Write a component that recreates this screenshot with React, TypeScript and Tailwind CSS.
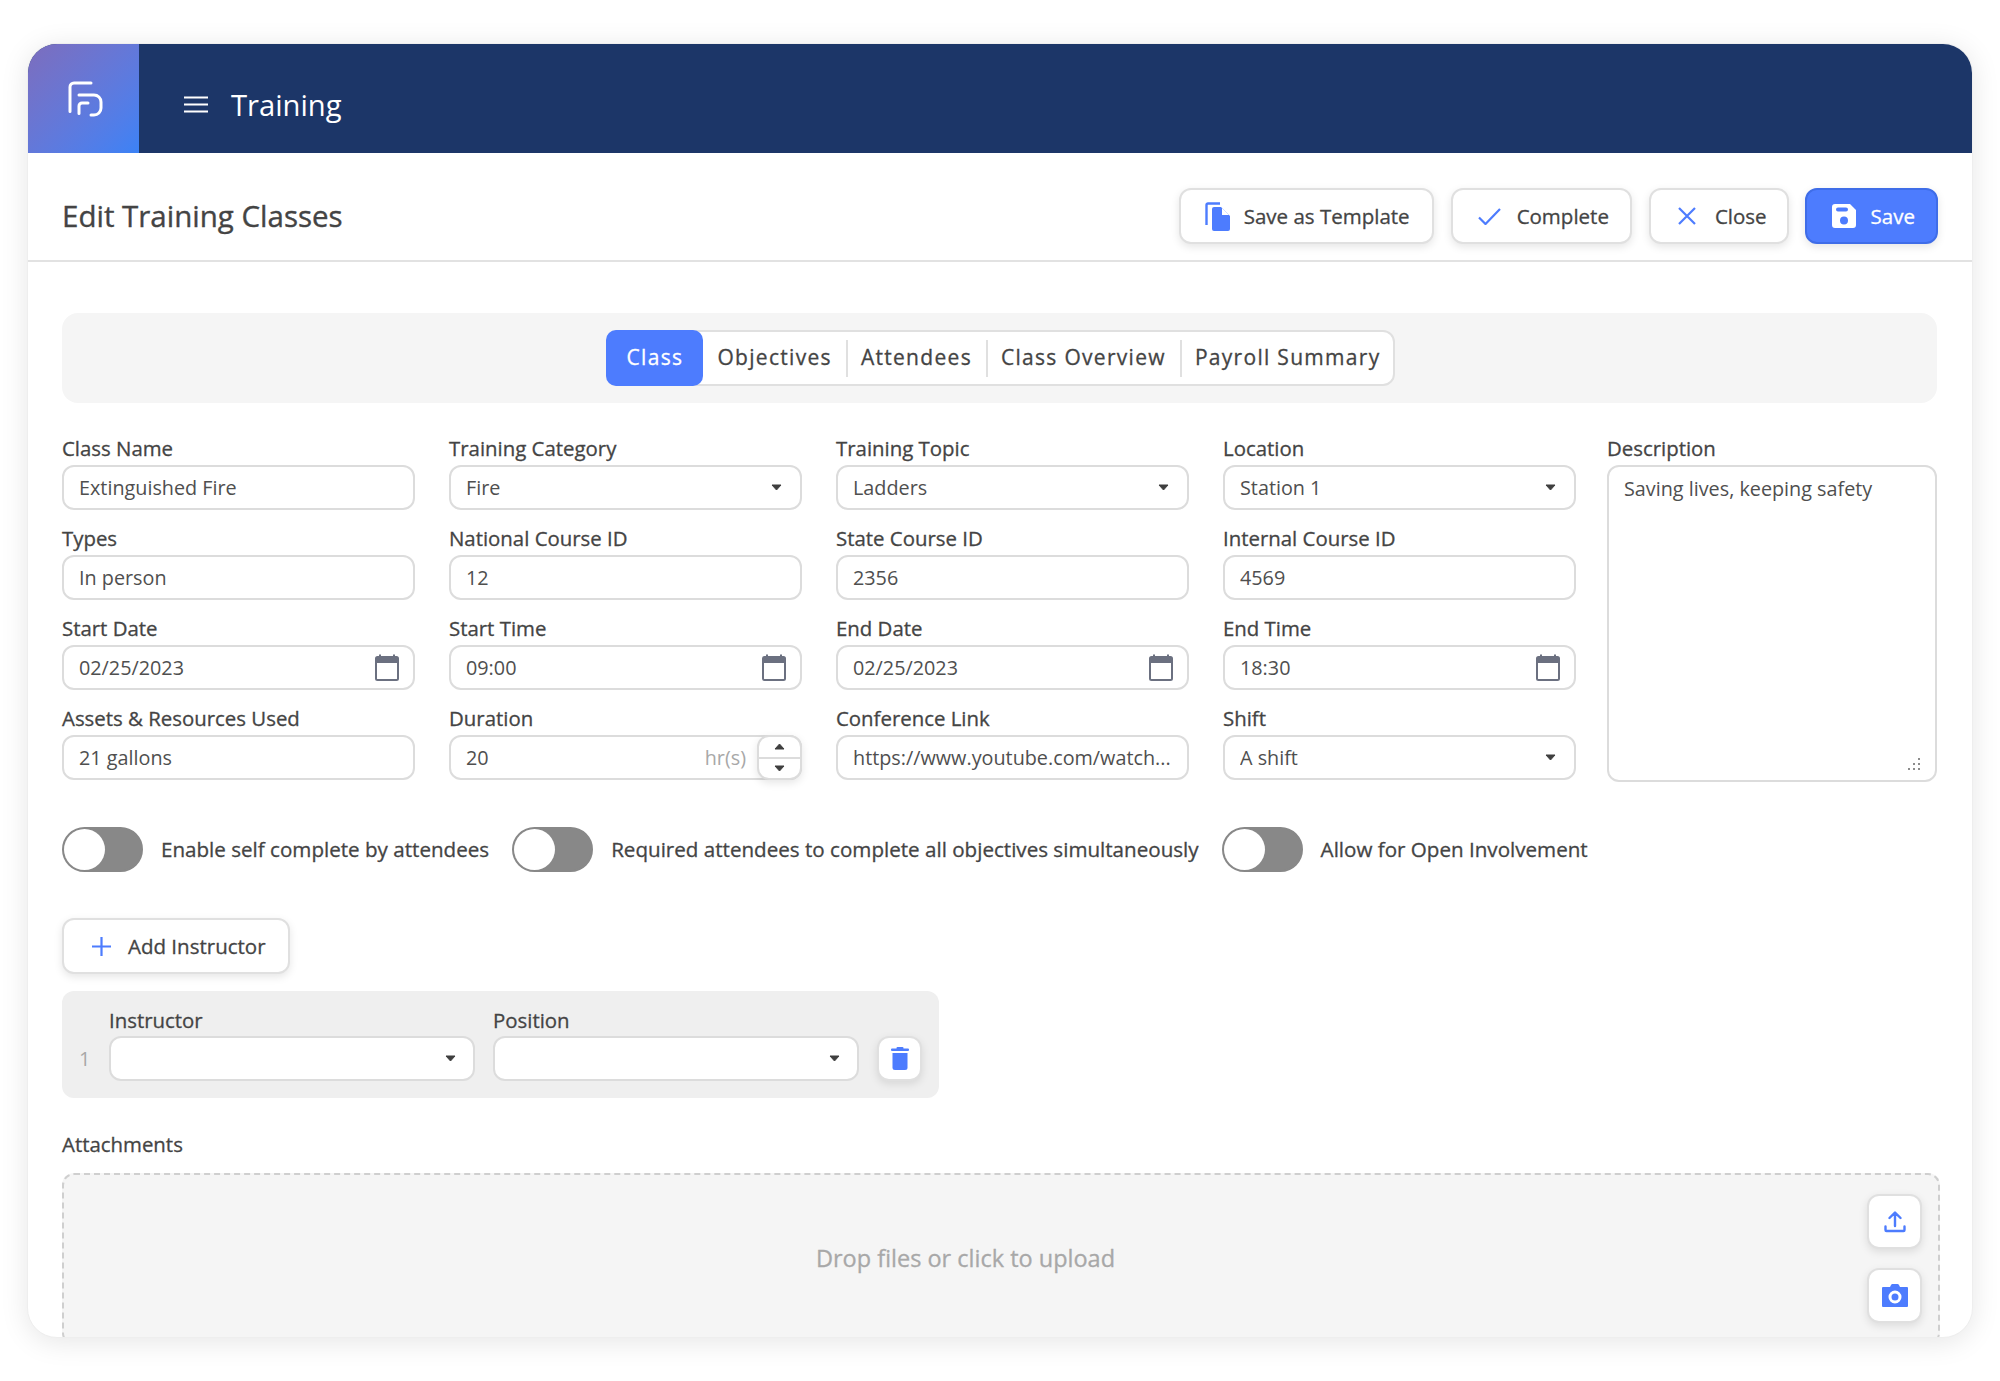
import React from "react";

const ROWS = [
  [
    { label: "Class Name", value: "Extinguished Fire" },
    { label: "Training Category", value: "Fire", kind: "select" },
    { label: "Training Topic", value: "Ladders", kind: "select" },
    { label: "Location", value: "Station 1", kind: "select" },
  ],
  [
    { label: "Types", value: "In person" },
    { label: "National Course ID", value: "12" },
    { label: "State Course ID", value: "2356" },
    { label: "Internal Course ID", value: "4569" },
  ],
  [
    { label: "Start Date", value: "02/25/2023", kind: "date" },
    { label: "Start Time", value: "09:00", kind: "date" },
    { label: "End Date", value: "02/25/2023", kind: "date" },
    { label: "End Time", value: "18:30", kind: "date" },
  ],
  [
    { label: "Assets & Resources Used", value: "21 gallons" },
    { label: "Duration", value: "20", kind: "number" },
    { label: "Conference Link", value: "https://www.youtube.com/watch..." },
    { label: "Shift", value: "A shift", kind: "select" },
  ],
];

const TABS = [
  { label: "Objectives", className: "pr-[14px] pl-[14px]" },
  { label: "Attendees", className: "border-l-2 border-[#e0e0e0] pr-[14px] pl-[13px]" },
  { label: "Class Overview", className: "border-l-2 border-[#e0e0e0] pr-[14px] pl-[13px]" },
  { label: "Payroll Summary", className: "border-l-2 border-[#e0e0e0] pr-[12px] pl-[13px]" },
];

const TOGGLES = [
  "Enable self complete by attendees",
  "Required attendees to complete all objectives simultaneously",
  "Allow for Open Involvement",
];

// Open Sans has no 500 here, so medium text is regular with a thin stroke
const LABEL = "text-[20.4px] leading-[22px] text-[#444] [-webkit-text-stroke-width:0.3px]";

function Caret({ up = false }: { up?: boolean }) {
  return (
    <svg width="11" height="7" viewBox="0 0 11 7" className={up ? "rotate-180" : ""}>
      <path d="M1 1h9L5.5 6z" fill="#3f3f3f" stroke="#3f3f3f" strokeWidth="1" strokeLinejoin="round" />
    </svg>
  );
}

function CalendarIcon() {
  return (
    <svg width="24" height="27" viewBox="0 0 24 27" fill="none">
      <path d="M5 0.5v4M19 0.5v4" stroke="#6b7080" strokeWidth="2" />
      <rect x="1" y="3" width="22" height="23" rx="1.5" stroke="#6b7080" strokeWidth="2" />
      <rect x="1" y="3" width="22" height="6" fill="#6b7080" />
    </svg>
  );
}

function Field({ label, value, kind }: { label: string; value: string; kind?: string }) {
  return (
    <div>
      <div className={`mb-[6px] ${LABEL}`}>{label}</div>
      <div className="flex h-[45px] items-center rounded-[12px] border-2 border-[#dcdcdc] bg-white pl-[15px] text-[19.8px] text-[#4f4f4f]">
        <span className="flex-1 truncate">{value}</span>
        {kind === "select" && (
          <span className="mr-[18px] flex">
            <Caret />
          </span>
        )}
        {kind === "date" && (
          <span className="mr-[14px] flex">
            <CalendarIcon />
          </span>
        )}
        {kind === "number" && (
          <>
            <span className="mr-[11px] text-[#a8a8a8]">hr(s)</span>
            <div className="-my-[2px] -mr-[2px] flex h-[45px] w-[45px] flex-col rounded-[12px] border-2 border-[#dcdcdc] bg-white shadow-[0_3px_8px_rgba(0,0,0,0.1)]">
              <div className="flex flex-1 items-center justify-center border-b-2 border-[#dcdcdc]">
                <Caret up />
              </div>
              <div className="flex flex-1 items-center justify-center">
                <Caret />
              </div>
            </div>
          </>
        )}
      </div>
    </div>
  );
}

function ActionButton({
  icon,
  label,
  className,
}: {
  icon: React.ReactNode;
  label: string;
  className: string;
}) {
  return (
    <button
      className={`flex h-[56px] items-center rounded-[12px] border-2 border-[#e0e0e0] bg-white text-[20.5px] text-[#444] shadow-[0_3px_8px_rgba(0,0,0,0.1)] [-webkit-text-stroke-width:0.3px] ${className}`}
    >
      {icon}
      {label}
    </button>
  );
}

function Toggle() {
  return (
    <div className="flex h-[45px] w-[81px] shrink-0 items-center rounded-full border-2 border-[#888] bg-[#888]">
      <div className="h-[41px] w-[41px] rounded-full bg-white" />
    </div>
  );
}

function SquareButton({ children, className }: { children: React.ReactNode; className: string }) {
  return (
    <button
      className={`flex items-center justify-center rounded-[12px] border-2 border-[#e0e0e0] bg-white shadow-[0_3px_8px_rgba(0,0,0,0.1)] ${className}`}
    >
      {children}
    </button>
  );
}

export default function App() {
  return (
    <div className="h-[1381px] w-[2000px] bg-white pt-[43px] pl-[27px] font-['Open_Sans',sans-serif]">
      <div className="flex h-[1295px] w-[1946px] flex-col overflow-hidden rounded-[30px] border border-[#eee] bg-white shadow-[0_4px_28px_rgba(0,0,0,0.1)]">
        <header className="flex h-[109px] shrink-0 items-stretch bg-[#1c3668]">
          <div className="flex w-[111px] items-center justify-center bg-gradient-to-br from-[#7c6dbd] to-[#3b82f6]">
            <svg width="60" height="60" viewBox="0 0 60 60" fill="none" stroke="white" strokeWidth="3" strokeLinecap="round" className="mt-[2px] -ml-[7px]">
              <path d="M20 41.5V17a4 4 0 0 1 4-4h17" />
              <path d="M29 25h15a7 7 0 0 1 7 7v6a7 7 0 0 1-7 7h-3" />
              <path d="M29 43.5V36a3 3 0 0 1 3-3h6" />
            </svg>
          </div>
          <div className="ml-[45px] flex items-center pt-[14px]">
            <svg width="24" height="17" viewBox="0 0 24 17" className="-mt-[2px]">
              <path d="M0 1.5h24M0 8.5h24M0 15.5h24" stroke="white" strokeWidth="2.2" />
            </svg>
            <span className="ml-[23px] text-[29.2px] text-white">Training</span>
          </div>
        </header>

        <div className="flex h-[109px] shrink-0 items-center justify-between border-b-2 border-[#e2e2e2] pt-[19px] pr-[34px] pl-[34px]">
          <h1 className="text-[29.5px] text-[#444] [-webkit-text-stroke-width:0.35px]">Edit Training Classes</h1>
          <div className="flex gap-[17px]">
            <ActionButton
              className="pr-[22px] pl-[24px]"
              label="Save as Template"
              icon={
                <svg width="25" height="29" viewBox="0 0 25 29" className="mr-[14px]">
                  <path d="M1.5 23V3a1.5 1.5 0 0 1 1.5-1.5h12" fill="none" stroke="#4d7cfe" strokeWidth="2.4" />
                  <path d="M7 7a2 2 0 0 1 2-2h7l9 9v13a2 2 0 0 1-2 2H9a2 2 0 0 1-2-2z" fill="#4d7cfe" />
                  <path d="M17 6l7 7h-7z" fill="white" />
                </svg>
              }
            />
            <ActionButton
              className="pr-[21px] pl-[25px]"
              label="Complete"
              icon={
                <svg width="23" height="17" viewBox="0 0 23 17" className="mr-[16px]" fill="none">
                  <path d="M1 9.5l6.5 6.5L22 1" stroke="#4d7cfe" strokeWidth="2.2" />
                </svg>
              }
            />
            <ActionButton
              className="pr-[20px] pl-[27px]"
              label="Close"
              icon={
                <svg width="18" height="18" viewBox="0 0 18 18" className="mr-[19px]" fill="none">
                  <path d="M1 1l16 16M17 1L1 17" stroke="#4d7cfe" strokeWidth="2.2" />
                </svg>
              }
            />
            <button className="-ml-[1px] flex h-[56px] items-center rounded-[12px] border-2 border-[#3f6de8] bg-[#4d7cfe] pr-[21px] pl-[25px] text-[20.5px] text-white shadow-[0_3px_8px_rgba(0,0,0,0.1)] [-webkit-text-stroke-width:0.3px]">
              <svg width="24" height="24" viewBox="0 0 24 24" className="mr-[15px]">
                <path
                  fillRule="evenodd"
                  d="M3 0h15l6 6v15a3 3 0 0 1-3 3H3a3 3 0 0 1-3-3V3a3 3 0 0 1 3-3zM6 3.5a2 2 0 0 0 0 4h8a2 2 0 0 0 0-4zM12 12.5a4 4 0 1 0 0 8 4 4 0 0 0 0-8z"
                  fill="white"
                />
              </svg>
              Save
            </button>
          </div>
        </div>

        <main className="pt-[51px] pr-[35px] pl-[34px]">
          <div className="flex h-[90px] items-center justify-center rounded-[16px] bg-[#f5f5f5]">
            <div className="ml-[2px] flex h-[56px] items-center rounded-[12px] border-2 border-[#e0e0e0] bg-white text-[21px] tracking-[1.3px] text-[#444] [-webkit-text-stroke-width:0.3px]">
              <div className="-my-[2px] -ml-[2px] flex h-[56px] w-[97px] items-center justify-center rounded-[10px] bg-[#4d7cfe] text-white">
                Class
              </div>
              {TABS.map((tab) => (
                <div key={tab.label} className={`flex h-[37px] items-center ${tab.className}`}>
                  {tab.label}
                </div>
              ))}
            </div>
          </div>

          <div className="mt-[34px] flex gap-[31px]">
            <div className="grid w-[1514px] shrink-0 grid-cols-[353px_353px_353px_353px] gap-x-[34px] gap-y-[17px]">
              {ROWS.flat().map((field) => (
                <Field key={field.label} label={field.label} value={field.value} kind={field.kind} />
              ))}
            </div>
            <div className="flex w-[330px] flex-col">
              <div className={`mb-[6px] ${LABEL}`}>Description</div>
              <div className="relative -mb-[2px] flex-1 rounded-[12px] border-2 border-[#dcdcdc] px-[15px] py-[7px] text-[19.8px] text-[#4f4f4f]">
                Saving lives, keeping safety
                <svg width="13" height="13" viewBox="0 0 13 13" className="absolute right-[14px] bottom-[9px]" fill="#8c8c8c">
                  <rect x="10" y="0" width="2" height="2" />
                  <rect x="5" y="5" width="2" height="2" />
                  <rect x="10" y="5" width="2" height="2" />
                  <rect x="0" y="10" width="2" height="2" />
                  <rect x="5" y="10" width="2" height="2" />
                  <rect x="10" y="10" width="2" height="2" />
                </svg>
              </div>
            </div>
          </div>

          <div className="mt-[47px] flex items-center gap-[23px]">
            {TOGGLES.map((label) => (
              <div key={label} className="flex items-center gap-[18px]">
                <Toggle />
                <span className="text-[20.6px] text-[#444] [-webkit-text-stroke-width:0.3px]">{label}</span>
              </div>
            ))}
          </div>

          <ActionButton
            className="mt-[46px] pr-[22px] pl-[28px]"
            label="Add Instructor"
            icon={
              <svg width="19" height="19" viewBox="0 0 19 19" className="mr-[17px]" fill="none">
                <path d="M9.5 0v19M0 9.5h19" stroke="#4d7cfe" strokeWidth="2.2" />
              </svg>
            }
          />

          <div className="mt-[17px] flex h-[107px] w-[877px] items-end rounded-[12px] bg-[#efefef] pb-[17px]">
            <div className="flex h-[45px] w-[47px] items-center pl-[17px] text-[20px] text-[#a8a8a8]">1</div>
            <div className="w-[366px]">
              <div className={`mb-[5px] ${LABEL}`}>Instructor</div>
              <div className="flex h-[45px] items-center justify-end rounded-[12px] border-2 border-[#dcdcdc] bg-white pr-[17px]">
                <Caret />
              </div>
            </div>
            <div className="ml-[18px] w-[366px]">
              <div className={`mb-[5px] ${LABEL}`}>Position</div>
              <div className="flex h-[45px] items-center justify-end rounded-[12px] border-2 border-[#dcdcdc] bg-white pr-[17px]">
                <Caret />
              </div>
            </div>
            <SquareButton className="ml-[18px] h-[45px] w-[45px]">
              <svg width="18" height="23" viewBox="0 0 18 23" fill="#4d7cfe">
                <rect x="5.5" y="0" width="7" height="2.5" rx="1" />
                <rect x="0" y="1.5" width="18" height="2.5" rx="1" />
                <path d="M1.5 6h15v14.5a2.5 2.5 0 0 1-2.5 2.5H4a2.5 2.5 0 0 1-2.5-2.5z" />
              </svg>
            </SquareButton>
          </div>

          <div className={`mt-[35px] mb-[18px] ${LABEL}`}>Attachments</div>

          <div className="flex h-[172px] w-[1878px] rounded-[12px] border-2 border-dashed border-[#cfcfcf] bg-[#f5f5f5] pt-[19px] pr-[16px]">
            <div className="-mt-[19px] flex flex-1 items-center justify-center text-[23.5px] text-[#a8a8a8] [-webkit-text-stroke-width:0.3px]">
              Drop files or click to upload
            </div>
            <div className="flex flex-col gap-[19px]">
              <SquareButton className="h-[55px] w-[55px]">
                <svg width="22" height="22" viewBox="0 0 22 22" fill="none" stroke="#4d7cfe" strokeWidth="2.4" strokeLinecap="round" strokeLinejoin="round">
                  <path d="M11 15V2M5.5 7L11 1.5 16.5 7M1.5 15.5v3.5a1 1 0 0 0 1 1h17a1 1 0 0 0 1-1v-3.5" />
                </svg>
              </SquareButton>
              <SquareButton className="h-[55px] w-[55px]">
                <svg width="26" height="23" viewBox="0 0 26 23">
                  <path
                    fillRule="evenodd"
                    d="M8 3l1-2a2 2 0 0 1 1.5-1h5A2 2 0 0 1 17 1l1 2h7a1 1 0 0 1 1 1v18a1 1 0 0 1-1 1H1a1 1 0 0 1-1-1V4a1 1 0 0 1 1-1zM13 6.5a6.5 6.5 0 1 0 0 13 6.5 6.5 0 0 0 0-13zM13 9.5a3.5 3.5 0 1 1 0 7 3.5 3.5 0 0 1 0-7z"
                    fill="#4d7cfe"
                  />
                </svg>
              </SquareButton>
            </div>
          </div>
        </main>
      </div>
    </div>
  );
}
